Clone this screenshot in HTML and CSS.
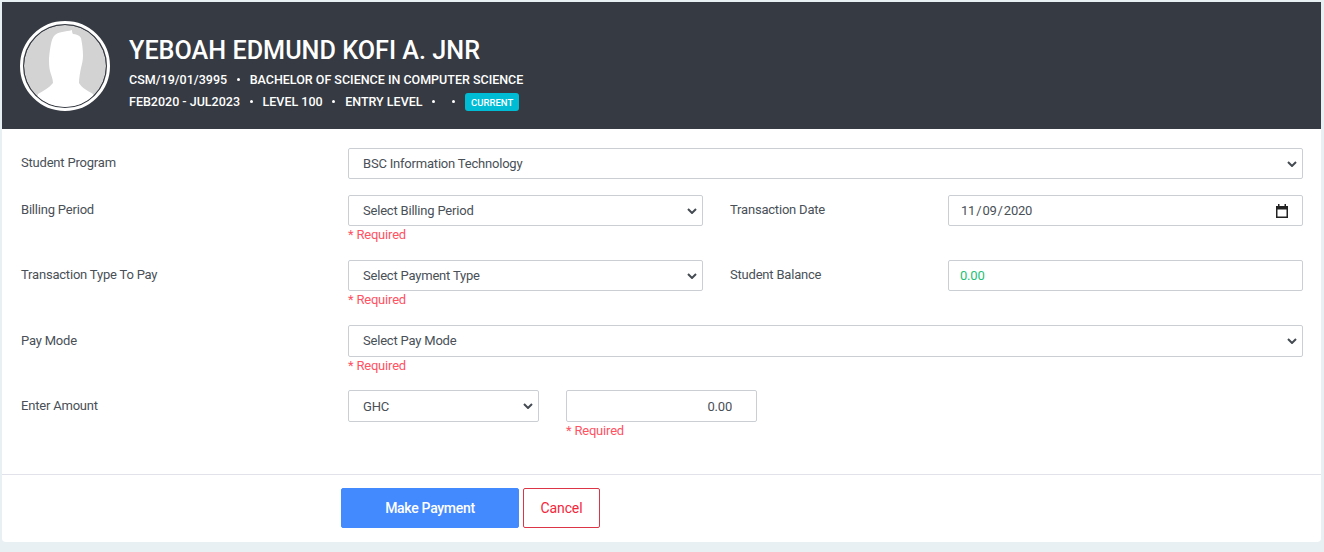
FILE: index.html
```html
<!DOCTYPE html>
<html lang="en">
<head>
<meta charset="utf-8">
<title>Make Payment</title>
<link rel="stylesheet" href="styles.css">
</head>
<body>
<main class="card">
  <header class="profile">
    <div class="avatar">
      <svg viewBox="0 0 82 82" width="82" height="82" aria-hidden="true">
        <circle cx="41" cy="41" r="41" fill="#d3d3d3"/>
        <path class="figure" d="M48 5C42 7 34 6 30 11C27 15 26 24 25 33C25 38 25 42 26 46C27 50 29 54 29 58C25 63 19 66 14 69L8 90H74L69 69C64 66 58 63 55 58C55 53 56 48 57 43C58 39 59 35 59 31C59 24 58 18 57 13C55 10 52 9 49 9C48 8 48 6 48 5Z"/>
      </svg>
    </div>
    <div class="profile-text">
      <h1 class="name">YEBOAH EDMUND KOFI A. JNR</h1>
      <p class="meta"><span>CSM/19/01/3995</span><i class="dot"></i><span>BACHELOR OF SCIENCE IN COMPUTER SCIENCE</span></p>
      <p class="meta"><span>FEB2020 - JUL2023</span><i class="dot"></i><span>LEVEL 100</span><i class="dot"></i><span>ENTRY LEVEL</span><i class="dot"></i><i class="dot"></i><span class="badge">CURRENT</span></p>
    </div>
  </header>

  <form class="form">
    <div class="row">
      <label class="label">Student Program</label>
      <select class="control wide"><option>BSC Information Technology</option></select>
    </div>
    <div class="row">
      <label class="label">Billing Period</label>
      <div class="field">
        <select class="control"><option>Select Billing Period</option></select>
        <div class="error">* Required</div>
      </div>
      <label class="label">Transaction Date</label>
      <input class="control date" type="date" value="2020-11-09">
    </div>
    <div class="row">
      <label class="label">Transaction Type To Pay</label>
      <div class="field">
        <select class="control"><option>Select Payment Type</option></select>
        <div class="error">* Required</div>
      </div>
      <label class="label">Student Balance</label>
      <input class="control balance" type="text" value="0.00">
    </div>
    <div class="row">
      <label class="label low">Pay Mode</label>
      <div class="field wide">
        <select class="control tall raised"><option>Select Pay Mode</option></select>
        <div class="error short">* Required</div>
      </div>
    </div>
    <div class="row">
      <label class="label low">Enter Amount</label>
      <div class="amount">
        <select class="control tall"><option>GHC</option></select>
        <div class="field">
          <input class="control tall money" type="text" value="0.00">
          <div class="error">* Required</div>
        </div>
      </div>
    </div>
  </form>

  <footer class="actions">
    <button class="btn primary" type="button">Make Payment</button>
    <button class="btn outline" type="button">Cancel</button>
  </footer>
</main>
</body>
</html>
```
FILE: styles.css
```css
* { box-sizing: border-box; }

html, body { height: 100%; }

body {
  margin: 0;
  padding: 2px 3px 10px 2px;
  background: #e9f0f3;
  font-family: Roboto, "Liberation Sans", sans-serif;
  font-size: 13px;
  color: #495057;
  overflow: hidden;
}

.card {
  height: 540px;
  background: #fff;
  border-radius: 0 0 4px 4px;
  display: flex;
  flex-direction: column;
}

.profile {
  height: 127px;
  background: #363a42;
  color: #fff;
  display: flex;
  align-items: center;
  padding: 0 0 0 18px;
  gap: 19px;
}

.avatar {
  width: 90px;
  height: 90px;
  flex: none;
  border-radius: 50%;
  border: 3px solid #fff;
  padding: 1px;
  background: #363a42;
  overflow: hidden;
}

.avatar svg { display: block; border-radius: 50%; }

.figure { fill: #fff; }

.profile-text { padding-top: 17px; }

.name {
  margin: 0 0 3px;
  font-size: 25.2px;
  line-height: 30px;
  font-weight: 500;
}

.meta {
  margin: 0;
  height: 22px;
  display: flex;
  align-items: center;
  font-size: 12.5px;
  font-weight: 500;
}

.dot {
  width: 3px;
  height: 3px;
  margin: 0 10px 0 9.5px;
  border-radius: 50%;
  background: #fff;
}

.dot + .dot { margin-left: 7px; }

.badge {
  height: 18px;
  padding: 0 6px;
  border-radius: 3px;
  background: #00bcd4;
  font-size: 9.5px;
  line-height: 19px;
}

.form {
  flex: 1;
  padding: 19px 18px 0 19px;
  display: flex;
  flex-direction: column;
  gap: 16px;
}

.row {
  display: grid;
  grid-template-columns: 327px 355px 245px 355px;
}

.row > :nth-child(3) { margin-left: 27px; }

.label {
  display: block;
  padding-top: 7px;
  line-height: 15px;
  letter-spacing: -0.2px;
  color: #495057;
}

.low { padding-top: 8px; }

.wide { grid-column: 2 / 5; }

.field { min-width: 0; }

.control {
  display: block;
  width: 100%;
  height: 31px;
  padding: 0 14px;
  background-color: #fff;
  border: 1px solid #cbcfd3;
  border-radius: 2px;
  font-family: inherit;
  font-size: 13px;
  letter-spacing: -0.2px;
  color: #495057;
  outline: none;
}

select.control {
  appearance: none;
  padding: 0 24px 0 14px;
  background-image: url("data:image/svg+xml,%3Csvg xmlns='http://www.w3.org/2000/svg' width='10' height='6' viewBox='0 0 10 6'%3E%3Cpath d='M1 1l4 4 4-4' fill='none' stroke='%23454b52' stroke-width='2'/%3E%3C/svg%3E");
  background-repeat: no-repeat;
  background-position: right 5px center;
  background-size: 10px 6px;
}

.tall { height: 32px; }

select.raised { padding-bottom: 2px; }

.date { padding-right: 14px; padding-left: 11px; }

.date::-webkit-calendar-picker-indicator {
  width: 12px;
  height: 14px;
  margin: 0;
  padding: 0;
  background: url("data:image/svg+xml,%3Csvg xmlns='http://www.w3.org/2000/svg' width='12' height='14' viewBox='0 0 12 14'%3E%3Cpath fill='%23222' d='M2 0h1.5v2h5V0H10v2h2v12H0V2h2zM1.5 5.5v7h9v-7z'/%3E%3C/svg%3E") center / 12px 14px no-repeat;
}

.balance { color: #1fbf75; padding-left: 11px; }

.money { text-align: right; padding-right: 24px; }

.amount {
  grid-column: 2 / 4;
  display: grid;
  grid-template-columns: 191px 191px;
  column-gap: 27px;
}

.error {
  height: 18px;
  font-size: 13px;
  line-height: 18px;
  letter-spacing: -0.2px;
  color: #ff5263;
}

.short { height: 17px; }

.actions {
  height: 68px;
  flex: none;
  border-top: 1px solid #e2e2ea;
  padding: 13px 0 0 339px;
  display: flex;
  gap: 4px;
  align-items: flex-start;
}

.btn {
  height: 40px;
  border-radius: 2px;
  font-family: inherit;
  font-size: 14px;
  cursor: pointer;
}

.primary {
  width: 178px;
  border: 1px solid #448aff;
  background: #448aff;
  color: #fff;
  font-weight: 500;
  letter-spacing: -0.3px;
}

.outline {
  width: 77px;
  border: 1px solid #dc3545;
  background: #fff;
  color: #f4263c;
  letter-spacing: -0.1px;
}
```
